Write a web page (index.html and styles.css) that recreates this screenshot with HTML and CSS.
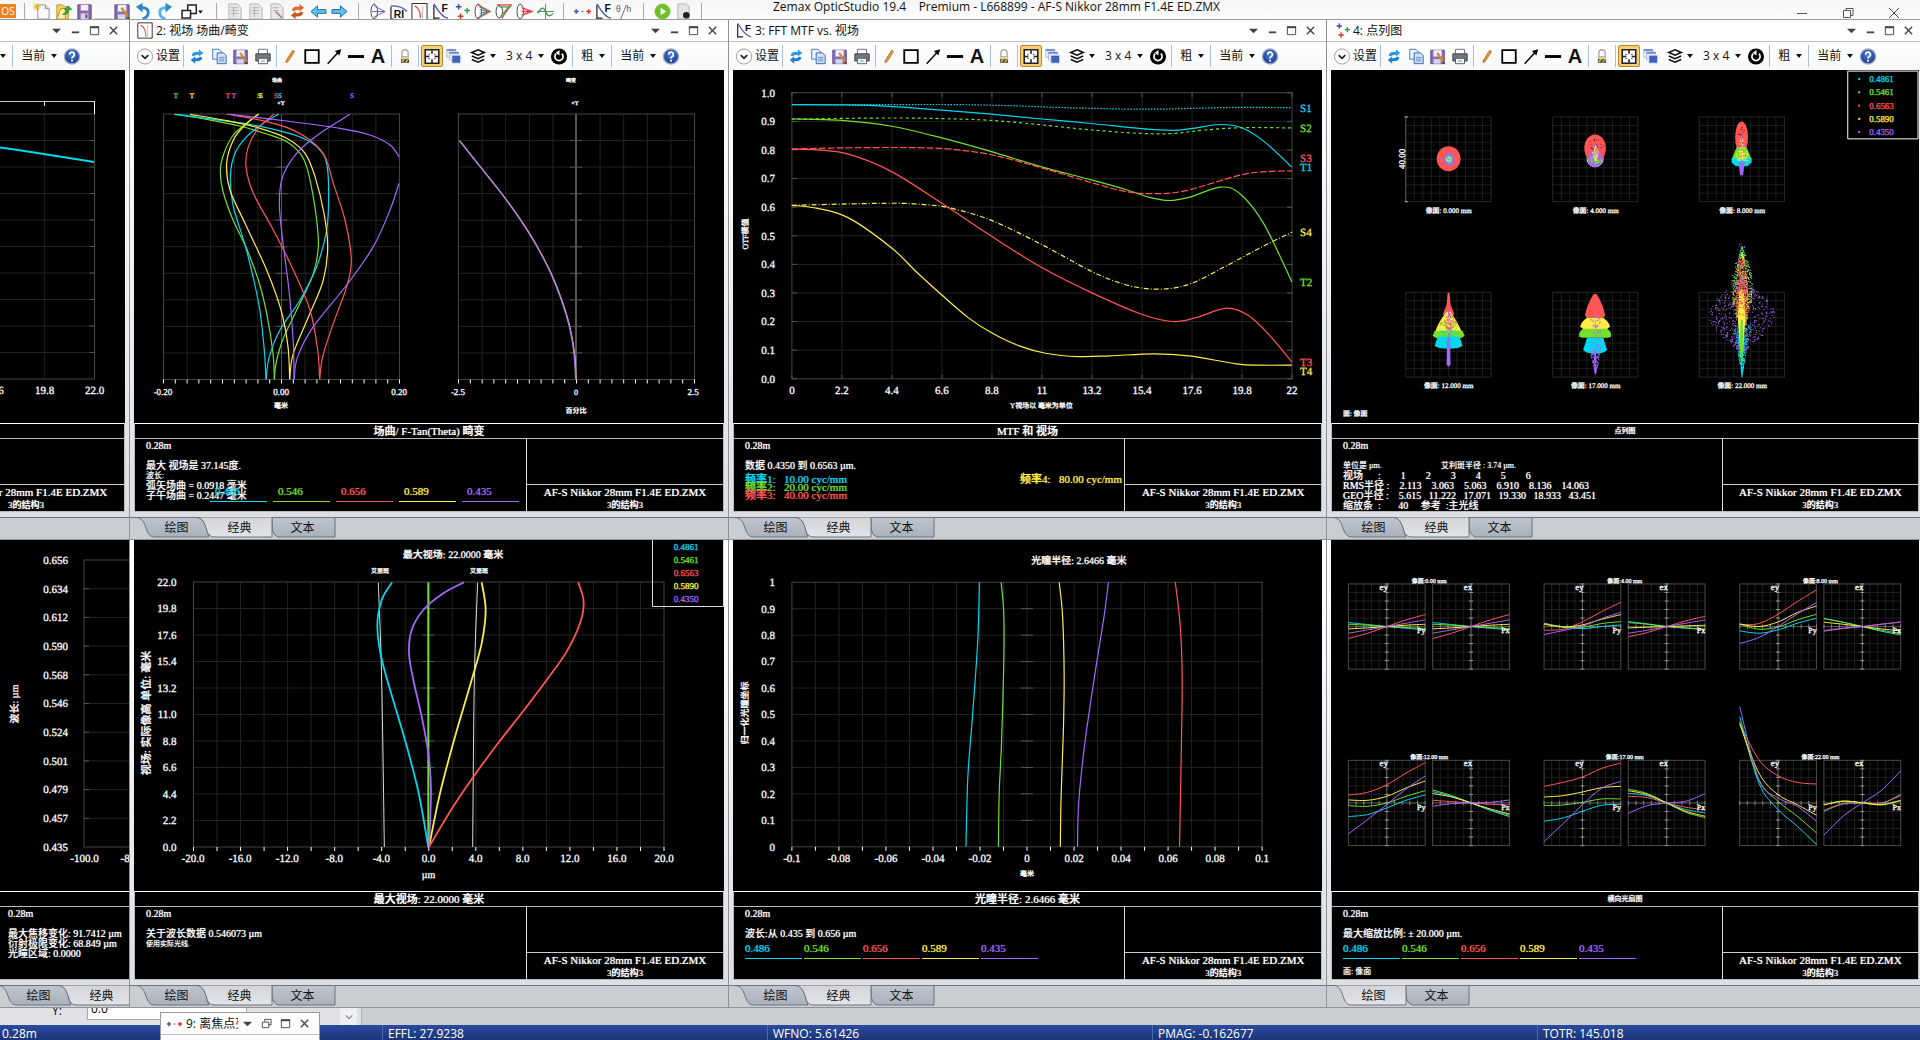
FILE: index.html
```html
<!DOCTYPE html>
<html lang="zh-CN">
<head>
<meta charset="utf-8">
<title>Zemax OpticStudio 19.4</title>
<link rel="stylesheet" href="styles.css">
</head>
<body>
<svg class="defs" aria-hidden="true">
  <defs>
    <linearGradient id="gTab" x1="0" y1="0" x2="0" y2="1"><stop offset="0" stop-color="#bfc5ce"/><stop offset="1" stop-color="#a9b1bc"/></linearGradient>
    <linearGradient id="gOn" x1="0" y1="0" x2="0" y2="1"><stop offset="0" stop-color="#d2d4d8"/><stop offset="1" stop-color="#e2e4e8"/></linearGradient>
    <radialGradient id="gHelp" cx=".5" cy=".4"><stop offset="0" stop-color="#4f86e0"/><stop offset="1" stop-color="#1f3f94"/></radialGradient>
    <symbol id="i-new" viewBox="0 0 20 18"><path d="M5 2h8l4 4v11H5z" fill="#fafafa" stroke="#8a8f98"/><path d="M13 2v4h4" fill="#ddd" stroke="#8a8f98"/><path d="M4 0v8M0 4h8M1 1l6 6M7 1L1 7" stroke="#e0b000"/></symbol>
    <symbol id="i-open" viewBox="0 0 20 18"><path d="M3 2h6l2 2h4v13H3z" fill="#f3d26b" stroke="#b78f1e"/><path d="M3 17L7 6h5v11z" fill="#fff0a8" stroke="#b78f1e"/><path d="M8 9q7 1 7-5h3l-4-4-4 4h2q0 4-4 5z" fill="#3aa845" stroke="#1f7a2b" stroke-width=".6" transform="translate(1 3)"/></symbol>
    <symbol id="i-save" viewBox="0 0 20 18"><path d="M3 2h14v15H3z" fill="#8d6bb0" stroke="#5d3d80"/><path d="M6 2h8v6H6z" fill="#f3f0f8"/><path d="M6 11h8v6H6z" fill="#d9d6e4"/><path d="M11 12h2v4h-2z" fill="#5d3d80"/></symbol>
    <symbol id="i-saveas" viewBox="0 0 20 18"><path d="M2 2h15v15H2z" fill="#8673b8" stroke="#54418a"/><path d="M5 2h9v7H5z" fill="#f3f0f8"/><path d="M5 12h8v5H5z" fill="#d9d6e4"/><path d="M9 5l8 11" stroke="#d9872b" stroke-width="2.4"/><path d="M16 14l2 4-3-2z" fill="#333"/></symbol>
    <symbol id="i-undo" viewBox="0 0 20 18"><path d="M6 5q9-1 9 5 0 5-6 7" fill="none" stroke="#2f86c8" stroke-width="3"/><path d="M2 4l7-4v10z" fill="#2f86c8"/></symbol>
    <symbol id="i-redo" viewBox="0 0 20 18"><path d="M14 5q-9-1-9 5 0 5 6 7" fill="none" stroke="#55b4e8" stroke-width="3"/><path d="M18 4l-7-4v10z" fill="#2f86c8"/></symbol>
    <symbol id="i-wins" viewBox="0 0 24 18"><path d="M8 2h9v9H8z" fill="#fff" stroke="#222" stroke-width="1.6"/><path d="M2 8h9v8H2z" fill="#fff" stroke="#222" stroke-width="1.6"/><path d="M19 8h5l-2.500 3z"/></symbol>
    <symbol id="i-doc" viewBox="0 0 20 18"><path d="M4 1h9l4 4v12H4z" fill="#e8e8e8" stroke="#b5b5b5"/><path d="M6 5h8M6 8h8M6 11h8M9 4v11" stroke="#b0b0b0"/></symbol>
    <symbol id="i-docx" viewBox="0 0 20 18"><path d="M4 1h9l4 4v12H4z" fill="#e8e8e8" stroke="#b5b5b5"/><path d="M6 5h6M6 8h6" stroke="#b0b0b0"/><path d="M9 9l7 7" stroke="#b06a6a" stroke-width="1.5"/></symbol>
    <symbol id="i-cycle" viewBox="0 0 20 18"><path d="M4 8q1-5 8-4V1l5 4-5 4V7q-5 0-5 2z" fill="#e2672b"/><path d="M16 10q-1 5-8 4v3l-5-4 5-4v2q5 0 5-2z" fill="#c9531c"/></symbol>
    <symbol id="i-sync" viewBox="0 0 20 18"><path d="M4 8q1-5 8-4V1l5 4-5 4V7q-5 0-5 2z" fill="#2d9be0"/><path d="M16 10q-1 5-8 4v3l-5-4 5-4v2q5 0 5-2z" fill="#1f7fc8"/></symbol>
    <symbol id="i-left" viewBox="0 0 20 18"><path d="M2 9l7-6v4h9v4H9v4z" fill="#5cc0f0" stroke="#2368a8"/></symbol>
    <symbol id="i-right" viewBox="0 0 20 18"><path d="M18 9l-7-6v4H2v4h9v4z" fill="#5cc0f0" stroke="#2368a8"/></symbol>
    <symbol id="i-lens" viewBox="0 0 20 18"><path d="M6 1q4 1 4 8t-4 8q-3-2-3-8t3-8z" fill="#fff" stroke="#444"/><path d="M6 3l12 6-12 6M4 9h14" fill="none" stroke="#5a63b8"/></symbol>
    <symbol id="i-lensg" viewBox="0 0 20 18"><path d="M5 1q4 1 4 8t-4 8q-3-2-3-8t3-8z" fill="#fff" stroke="#444"/><path d="M5 2l13 7L5 16" fill="none" stroke="#e04848" stroke-width="1.500"/><path d="M7 4l9 5-9 5" fill="none" stroke="#3aa050" stroke-width="1.300"/><path d="M7 7l8 2-8 2" fill="none" stroke="#5a63b8"/></symbol>
    <symbol id="i-lensd" viewBox="0 0 20 18"><path d="M5 2q4 1 4 7t-4 7q-3-2-3-7t3-7z" fill="#fff" stroke="#444"/><path d="M3 2h15L8 16" fill="none" stroke="#e04848" stroke-width="1.500"/><path d="M5 4h11L7 14" fill="none" stroke="#3aa050" stroke-width="1.300"/></symbol>
    <symbol id="i-lensr" viewBox="0 0 20 18"><path d="M5 1q4 1 4 8t-4 8q-3-2-3-8t3-8z" fill="#fff" stroke="#444"/><path d="M7 5l11 4L7 13M7 9h9" fill="none" stroke="#e04848" stroke-width="1.500"/></symbol>
    <symbol id="i-curve" viewBox="0 0 20 18"><path d="M2 .5h16v17H2z" fill="#fff" stroke="#222"/><path d="M5 3q6 3 6 13" fill="none" stroke="#e05050" stroke-width="1.300"/><path d="M13 3v13" stroke="#e9a0a0"/></symbol>
    <symbol id="i-mtf" viewBox="0 0 20 18"><path d="M3 2v15M3 16h6" stroke="#222" stroke-width="1.300"/><path d="M3 1c3 4 7 14 15 15" fill="none" stroke="#4a56b0" stroke-width="1.400"/><text x="11" y="10" class="glyphs">F</text></symbol>
    <symbol id="i-ri" viewBox="0 0 20 18"><path d="M2 17V4M2 17h3" stroke="#222" stroke-width="1.300"/><path d="M2 3q12 0 17 6" fill="none" stroke="#4a56b0" stroke-width="1.300"/><text x="5" y="16" class="glyphs">RI</text></symbol>
    <symbol id="i-theta" viewBox="0 0 20 18"><path d="M6 17L12 2" stroke="#667"/><text x="1" y="9" class="thin">θ</text><text x="12" y="9" class="thin">h</text></symbol>
    <symbol id="i-dots4" viewBox="0 0 20 18"><path d="M4 4h6M7 1v6" stroke="#3a4fa8" stroke-width="1.500"/><path d="M13 8h6M16 5v6" stroke="#2a9a4a" stroke-width="1.500"/><path d="M6 14h6M9 11v6" stroke="#e03030" stroke-width="1.500"/></symbol>
    <symbol id="i-dots3" viewBox="0 0 20 18"><path d="M1 9h5M3.500 6.500v5" stroke="#4b57a8" stroke-width="1.800"/><path d="M9 9h2" stroke="#3a9a5a" stroke-width="1.500"/><path d="M14 9h5M16.500 6.500v5" stroke="#e03030" stroke-width="1.800"/></symbol>
    <symbol id="i-sine" viewBox="0 0 20 18"><path d="M1 9h18M10 1v16" stroke="#777"/><path d="M2 11q5-10 8-2t8 2" fill="none" stroke="#3aa050" stroke-width="1.500"/></symbol>
    <symbol id="i-play" viewBox="0 0 20 18"><circle cx="10" cy="9" r="8" fill="#6fbf2a" stroke="#7fc23c"/><path d="M8 5l6 4-6 4z" fill="#fff"/></symbol>
    <symbol id="i-docl" viewBox="0 0 20 18"><path d="M4 1h9l3 3v13H4z" fill="#e4e4e4" stroke="#b5b5b5"/><circle cx="13" cy="13" r="3.500" fill="#222"/></symbol>
    <symbol id="i-chev" viewBox="1 1 18 18"><circle cx="10" cy="10" r="8" fill="#fff" stroke="#999"/><path d="M6.500 8.500l3.500 3.500 3.500-3.500" fill="none" stroke="#222" stroke-width="1.800"/></symbol>
    <symbol id="i-copy" viewBox="0 0 20 18"><path d="M3 1h7l3 3v8H3z" fill="#eaf3fc" stroke="#3d6fb0"/><path d="M8 5h7l3 3v9H8z" fill="#d4e6f8" stroke="#2d5aa0"/><path d="M10 10h6M10 12h6M10 14h6" stroke="#5a8ac8"/></symbol>
    <symbol id="i-print" viewBox="0 0 20 18"><path d="M5 1h10v6H5z" fill="#fff" stroke="#666"/><path d="M2 6h16v8H2z" fill="#73777d" stroke="#3c3f44"/><path d="M5 11h10v6H5z" fill="#f4f4f4" stroke="#555"/><path d="M8 14h4" stroke="#3d9bd0"/></symbol>
    <symbol id="i-pencil" viewBox="0 0 20 18"><path d="M6 13L13 2l2 1.500L8 14.500l-2.500 1.500z" fill="#e8973a" stroke="#a85c12" stroke-width=".8"/></symbol>
    <symbol id="i-rect" viewBox="0 0 20 18"><path d="M2.500 2h15v14h-15z" fill="none" stroke="#000" stroke-width="2"/></symbol>
    <symbol id="i-arrow" viewBox="0 0 20 18"><path d="M3 17L15 4" stroke="#000" stroke-width="1.600"/><path d="M18 1l-2 7-5-5z"/></symbol>
    <symbol id="i-line" viewBox="0 0 20 18"><path d="M1 9h18" stroke="#000" stroke-width="3.200"/></symbol>
    <symbol id="i-lock" viewBox="0 0 20 18"><path d="M6.500 9V5a3.500 3.500 0 0 1 7 0v4" fill="none" stroke="#aaa" stroke-width="1.500"/><path d="M5.500 9h9v7h-9z" fill="#444"/><path d="M5.500 9h9v3h-9z" fill="#d8cf9a"/><path d="M6 14l2-2h2l-3 4zM10 15l3-3h1v1l-3 3z" fill="#e8c840"/></symbol>
    <symbol id="i-fit" viewBox="0 0 20 18"><path d="M2.500 1.500h15v15h-15z" fill="#fff" stroke="#222" stroke-width="1.800"/><path d="M10 2v4M10 12v4M3 9h4M13 9h4" stroke="#222" stroke-width="1.800"/><path d="M7 6v1H6M13 6v1h1M7 12v-1H6M13 12v-1h1" stroke="#222" fill="none"/></symbol>
    <symbol id="i-cwin" viewBox="0 0 20 18"><path d="M2 1h10v9H2z" fill="#e8eef8" stroke="#b0bbd0"/><path d="M5 4h10v9H5z" fill="#e8eef8" stroke="#b0bbd0"/><path d="M2 1h10v2H2zM5 4h10v2H5z" fill="#6f88c8"/><path d="M7.500 7.500h10v9h-10z" fill="#3f62bc" stroke="#e8eef8"/></symbol>
    <symbol id="i-layers" viewBox="0 0 20 18"><path d="M10 2l7 3-7 3-7-3zM3 9l7 3 7-3M3 13l7 3 7-3" fill="none" stroke="#111" stroke-width="1.800"/></symbol>
    <symbol id="i-reset" viewBox="1 1 18 18"><circle cx="10" cy="10" r="8.500"/><path d="M7 7a4.300 4.300 0 1 0 6 0" fill="none" stroke="#fff" stroke-width="1.800"/><path d="M10.500 3v6L6.500 6z" fill="#fff"/></symbol>
    <symbol id="i-help" viewBox="1 1 18 18"><circle cx="10" cy="10" r="8" fill="url(#gHelp)" stroke="#9aa8c4" stroke-width="1.500"/><path d="M7.500 8a2.500 2.500 0 1 1 3.500 2.200q-1 .5-1 1.800M10 13.500v2" fill="none" stroke="#fff" stroke-width="1.800"/></symbol>
    <symbol id="i-down" viewBox="0 0 12 12"><path d="M1 4h10L6 9z" fill="#444"/></symbol>
    <symbol id="i-min" viewBox="0 0 12 12"><path d="M2 8h8" stroke="#444" stroke-width="2"/></symbol>
    <symbol id="i-max" viewBox="0 0 12 12"><path d="M1.500 2v8.500h9V2z" fill="none" stroke="#444"/><path d="M1 2.500h10" stroke="#444" stroke-width="2"/></symbol>
    <symbol id="i-close" viewBox="0 0 12 12"><path d="M2 2l8 8M10 2l-8 8" stroke="#444" stroke-width="1.500"/></symbol>
    <symbol id="i-rest" viewBox="0 0 12 12"><path d="M4 4V1.500h7v6H8M1.500 4.500h7v6h-7z" fill="none" stroke="#444"/></symbol>
    <symbol id="tabs3" viewBox="0 0 204 22"><path d="M139 .5h63V20h-57q-6-2-6-12z" fill="url(#gTab)" stroke="#6b7280"/><path d="M62 0C73 0 72 14 76 18q2 2 6 2h57V0z" fill="url(#gOn)" stroke="#6b7280"/><path d="M2 .5C9 .5 11 5 13 11c2 6 4 9 9 9h54C73 15 73 .5 63 .5z" fill="url(#gTab)" stroke="#6b7280"/></symbol>
    <symbol id="tabs2" viewBox="0 0 204 22"><path d="M76 .5h63V20H82q-6-2-6-12z" fill="url(#gTab)" stroke="#6b7280"/><path d="M2 0C9 0 11 5 13 11c2 6 4 9 9 9h54V0z" fill="url(#gOn)" stroke="#6b7280"/></symbol>
  </defs>
</svg>

<template id="tools">
  <button class="ico" aria-label="展开"><svg><use href="#i-chev"/></svg></button><button class="txt first">设置</button><i class="sep"></i>
  <button class="ico" aria-label="更新"><svg><use href="#i-sync"/></svg></button><button class="ico" aria-label="复制"><svg><use href="#i-copy"/></svg></button><button class="ico" aria-label="保存"><svg><use href="#i-saveas"/></svg></button><button class="ico" aria-label="打印"><svg><use href="#i-print"/></svg></button><i class="sep"></i>
  <button class="ico" aria-label="铅笔"><svg><use href="#i-pencil"/></svg></button><button class="ico" aria-label="矩形"><svg><use href="#i-rect"/></svg></button><button class="ico" aria-label="箭头"><svg><use href="#i-arrow"/></svg></button><button class="ico" aria-label="线"><svg><use href="#i-line"/></svg></button><button class="ico glyph">A</button><i class="sep"></i>
  <button class="ico" aria-label="锁定"><svg><use href="#i-lock"/></svg></button><i class="sep"></i>
  <button class="ico on" aria-label="适合窗口"><svg><use href="#i-fit"/></svg></button><button class="ico" aria-label="克隆窗口"><svg><use href="#i-cwin"/></svg></button>
  <button class="txt" aria-label="图层"><svg><use href="#i-layers"/></svg><b class="car"></b></button><button class="txt">3 x 4<b class="car"></b></button><button class="ico" aria-label="重置"><svg><use href="#i-reset"/></svg></button><i class="sep"></i>
  <button class="txt">粗<b class="car"></b></button><i class="sep"></i><button class="txt">当前<b class="car"></b></button><button class="ico" aria-label="帮助"><svg><use href="#i-help"/></svg></button>
</template>
<template id="winbtns">
  <button aria-label="菜单"><svg><use href="#i-down"/></svg></button><button aria-label="最小化"><svg><use href="#i-min"/></svg></button><button aria-label="最大化"><svg><use href="#i-max"/></svg></button><button aria-label="关闭"><svg><use href="#i-close"/></svg></button>
</template>

<header class="titlebar">
  <nav class="quick">
    <span class="logo">OS</span><i></i>
    <button aria-label="新建"><svg><use href="#i-new"/></svg></button><button aria-label="打开"><svg><use href="#i-open"/></svg></button><button aria-label="保存"><svg><use href="#i-save"/></svg></button><i class="blank"></i>
    <button aria-label="另存为"><svg><use href="#i-saveas"/></svg></button><button aria-label="撤消"><svg><use href="#i-undo"/></svg></button><button aria-label="重做"><svg><use href="#i-redo"/></svg></button><button class="wide" aria-label="窗口"><svg><use href="#i-wins"/></svg></button><i></i>
    <button aria-label="数据"><svg><use href="#i-doc"/></svg></button><button aria-label="报告"><svg><use href="#i-doc"/></svg></button><button aria-label="检查"><svg><use href="#i-docx"/></svg></button><button aria-label="更新"><svg><use href="#i-cycle"/></svg></button><button aria-label="后退"><svg><use href="#i-left"/></svg></button><button aria-label="前进"><svg><use href="#i-right"/></svg></button><i></i>
    <button aria-label="截面"><svg><use href="#i-lens"/></svg></button><button aria-label="相对照度"><svg><use href="#i-ri"/></svg></button><button aria-label="场曲"><svg><use href="#i-curve"/></svg></button><button aria-label="MTF"><svg><use href="#i-mtf"/></svg></button><button aria-label="点列图"><svg><use href="#i-dots4"/></svg></button><button aria-label="布局"><svg><use href="#i-lensg"/></svg></button><button aria-label="光线"><svg><use href="#i-lensd"/></svg></button><button aria-label="实体"><svg><use href="#i-lensr"/></svg></button><button aria-label="光扇"><svg><use href="#i-sine"/></svg></button><i></i>
    <button aria-label="离焦"><svg><use href="#i-dots3"/></svg></button><button aria-label="离焦 MTF"><svg><use href="#i-mtf"/></svg></button><button aria-label="角度"><svg><use href="#i-theta"/></svg></button><i></i>
    <button aria-label="运行"><svg><use href="#i-play"/></svg></button><button aria-label="锁定"><svg><use href="#i-docl"/></svg></button><i></i>
  </nav>
  <h1>Zemax OpticStudio 19.4 &nbsp;&nbsp; Premium - L668899 - AF-S Nikkor 28mm F1.4E ED.ZMX</h1>
  <div class="sys"><button aria-label="最小化"><svg viewBox="0 0 12 12"><path d="M1 6.500h10" stroke="#555"/></svg></button><button aria-label="还原"><svg viewBox="0 0 12 12"><path d="M4 3V1.500h7v7H9M1.500 3.500h7v7h-7z" fill="none" stroke="#555"/></svg></button><button aria-label="关闭"><svg viewBox="0 0 12 12"><path d="M1 1l10 10M11 1L1 11" stroke="#444"/></svg></button></div>
</header>

<main class="work">
  <section class="win cut-left">
    <div class="pane">
      <div class="head"><span class="ttl"></span><div class="wb"></div></div>
      <div class="tools"></div>
      <svg class="plot" id="p1" viewBox="-465 70 590 353"></svg>
      <div class="foot"><div class="cap"></div><div class="info"></div><div class="blank"></div><div class="file">AF-S Nikkor 28mm F1.4E ED.ZMX<small>3的结构3</small></div></div>
      <div class="tabs"></div>
    </div>
  </section>
  <section class="win">
    <div class="pane">
      <div class="head"><svg><use href="#i-curve"/></svg><span class="ttl">2: 视场 场曲/畸变</span><div class="wb"></div></div>
      <div class="tools"></div>
      <svg class="plot" id="p2" viewBox="134 70 590 353"></svg>
      <div class="foot"><div class="cap">场曲/ F-Tan(Theta) 畸变</div>
        <div class="info"><p>0.28m</p><p></p><p>最大 视场是 37.145度.</p><p class="s8">波长:</p><p>弧矢场曲 = 0.0918 毫米</p><p>子午场曲 = 0.2447 毫米</p>
          <div class="keys over"><span class="c">0.486</span><span class="g">0.546</span><span class="r">0.656</span><span class="y">0.589</span><span class="v">0.435</span></div></div>
        <div class="blank"></div><div class="file">AF-S Nikkor 28mm F1.4E ED.ZMX<small>3的结构3</small></div></div>
      <div class="tabs"><svg><use href="#tabs3"/></svg><button>绘图</button><button>经典</button><button>文本</button></div>
    </div>
  </section>
  <section class="win">
    <div class="pane">
      <div class="head"><svg><use href="#i-mtf"/></svg><span class="ttl">3: FFT MTF vs. 视场</span><div class="wb"></div></div>
      <div class="tools"></div>
      <svg class="plot" id="p3" viewBox="732 70 590 353"></svg>
      <div class="foot"><div class="cap">MTF 和 视场</div>
        <div class="info"><p>0.28m</p><p></p><p>数据 0.4350 到 0.6563 µm.</p>
          <div class="freq"><span class="c">频率1:</span><span class="c">10.00 cyc/mm</span><span class="y">频率4:</span><span class="y">80.00 cyc/mm</span><span class="g">频率2:</span><span class="g row">20.00 cyc/mm</span><span class="r">频率3:</span><span class="r row">40.00 cyc/mm</span></div></div>
        <div class="blank"></div><div class="file">AF-S Nikkor 28mm F1.4E ED.ZMX<small>3的结构3</small></div></div>
      <div class="tabs"><svg><use href="#tabs3"/></svg><button>绘图</button><button>经典</button><button>文本</button></div>
    </div>
  </section>
  <section class="win last">
    <div class="pane">
      <div class="head"><svg><use href="#i-dots4"/></svg><span class="ttl">4: 点列图</span><div class="wb"></div></div>
      <div class="tools"></div>
      <svg class="plot" id="p4" viewBox="1330 70 590 353"></svg>
      <div class="foot"><div class="cap s7">点列图</div>
        <div class="info pre"><p>0.28m</p><p></p><p class="s8 airy"><span>单位是 µm.</span><span>艾利斑半径 : 3.74 µm.</span></p><p>视场      :        1        2        3        4        5        6</p><p>RMS半径 :    2.113    3.063    5.063    6.910    8.136    14.063</p><p>GEO半径 :    5.615   11.222   17.071   19.330   18.933   43.451</p><p>缩放条  :       40     参考  :主光线</p></div>
        <div class="blank"></div><div class="file">AF-S Nikkor 28mm F1.4E ED.ZMX<small>3的结构3</small></div></div>
      <div class="tabs"><svg><use href="#tabs3"/></svg><button>绘图</button><button>经典</button><button>文本</button></div>
    </div>
  </section>

  <section class="win cut-right">
    <div class="pane">
      <svg class="plot" id="p5" viewBox="-4 540 590 351"></svg>
      <div class="foot"><div class="cap"></div><div class="info"><p>0.28m</p><p></p><p>最大焦移变化: 91.7412 µm</p><p>衍射极限变化: 68.849 µm</p><p>光瞳区域: 0.0000</p></div><div class="blank"></div><div class="file"></div></div>
      <div class="tabs"><svg><use href="#tabs3"/></svg><button>绘图</button><button>经典</button></div>
    </div>
  </section>
  <section class="win">
    <div class="pane">
      <svg class="plot" id="p6" viewBox="134 540 590 351"></svg>
      <div class="foot"><div class="cap">最大视场: 22.0000 毫米</div><div class="info"><p>0.28m</p><p></p><p>关于波长数据 0.546073 µm</p><p class="s7">使用实际光线.</p></div><div class="blank"></div><div class="file">AF-S Nikkor 28mm F1.4E ED.ZMX<small>3的结构3</small></div></div>
      <div class="tabs"><svg><use href="#tabs3"/></svg><button>绘图</button><button>经典</button><button>文本</button></div>
    </div>
  </section>
  <section class="win">
    <div class="pane">
      <svg class="plot" id="p7" viewBox="732 540 590 351"></svg>
      <div class="foot"><div class="cap">光瞳半径: 2.6466 毫米</div><div class="info"><p>0.28m</p><p></p><p>波长:从 0.435 到 0.656 µm</p>
        <div class="keys"><span class="c">0.486</span><span class="g">0.546</span><span class="r">0.656</span><span class="y">0.589</span><span class="v">0.435</span></div></div><div class="blank"></div><div class="file">AF-S Nikkor 28mm F1.4E ED.ZMX<small>3的结构3</small></div></div>
      <div class="tabs"><svg><use href="#tabs3"/></svg><button>绘图</button><button>经典</button><button>文本</button></div>
    </div>
  </section>
  <section class="win last">
    <div class="pane">
      <svg class="plot" id="p8" viewBox="1330 540 590 351"></svg>
      <div class="foot"><div class="cap s7">横向光扇图</div><div class="info"><p>0.28m</p><p></p><p>最大缩放比例: ± 20.000 µm.</p>
        <div class="keys"><span class="c">0.486</span><span class="g">0.546</span><span class="r">0.656</span><span class="y">0.589</span><span class="v">0.435</span></div><p class="s8 low">面: 像面</p></div><div class="blank"></div><div class="file">AF-S Nikkor 28mm F1.4E ED.ZMX<small>3的结构3</small></div></div>
      <div class="tabs"><svg><use href="#tabs2"/></svg><button>绘图</button><button>文本</button></div>
    </div>
  </section>
</main>

<div class="under">
  <div class="form"><label for="fy">Y:</label><input id="fy" value="0.0"><button aria-label="向下滚动"><svg viewBox="0 0 12 12"><path d="M2 4l4 4 4-4" fill="none" stroke="#888" stroke-width="1.500"/></svg></button></div>
  <aside class="float"><div class="fhead"><svg class="fi"><use href="#i-dots3"/></svg><span>9: 离焦点列图</span><button aria-label="菜单"><svg><use href="#i-down"/></svg></button><button aria-label="还原"><svg><use href="#i-rest"/></svg></button><button aria-label="最大化"><svg><use href="#i-max"/></svg></button><button aria-label="关闭"><svg><use href="#i-close"/></svg></button></div></aside>
</div>
<footer class="status"><span>0.28m</span><span>EFFL: 27.9238</span><span>WFNO: 5.61426</span><span>PMAG: -0.162677</span><span>TOTR: 145.018</span></footer>
<script src="charts.js"></script>
</body>
</html>
```
FILE: styles.css
```css
* { box-sizing: border-box; }
body { margin: 0; height: 100vh; overflow: hidden; display: flex; flex-direction: column; background: #cacdd2; font: 12px/16px "Open Sans", "Noto Sans CJK SC", sans-serif; color: #111; }
button { border: 0; padding: 0; background: none; font: inherit; color: inherit; display: flex; align-items: center; justify-content: center; }
h1, p { margin: 0; font-weight: normal; }
.defs { position: absolute; width: 0; height: 0; }
.glyphs { font: bold 11px "Liberation Sans", sans-serif; fill: #111; }
.thin { font: 9px "Liberation Sans", sans-serif; fill: #556; }

.titlebar { flex: 0 0 20px; display: flex; background: linear-gradient(#f6f6f6, #fdfdfd); border-bottom: 1px solid #9a9ba0; overflow: hidden; }
.quick { flex: 0 0 710px; display: flex; align-items: center; padding-top: 3px; }
.quick button { width: 21px; height: 17px; flex: none; }
.quick button svg { width: 19px; height: 17px; }
.quick .wide { width: 33px; }
.quick .wide svg { width: 25px; }
.quick i { flex: 1; height: 16px; background: linear-gradient(#a8a8a8, #a8a8a8) center / 1px 16px no-repeat; }
.quick i.blank { background: none; }
.quick .logo { width: 16px; height: 14px; background: #f08020; color: #fff; font: 10px/14px "Open Sans", sans-serif; text-align: center; }
.titlebar h1 { flex: 1; padding-left: 63px; font-size: 12px; line-height: 14px; white-space: nowrap; }
.sys { display: flex; align-items: flex-end; padding-right: 3px; }
.sys button { width: 46px; height: 12px; }
.sys svg { width: 12px; height: 12px; }

.work { flex: 1; min-height: 0; display: grid; grid-template-columns: 129fr 599fr 598fr 594fr; grid-template-rows: 520fr 468fr; }
.win { min-width: 0; min-height: 0; display: flex; overflow: hidden; border-left: 1px solid #8f9299; border-bottom: 1px solid #8f9299; background: linear-gradient(#fff 0, #fff 10%, #dcdde2 100%); padding: 0 4px; }
.win.last { padding-right: 1px; }
.win.cut-left { justify-content: flex-end; padding-left: 0; border-left: 0; }
.win.cut-left .pane { flex: 0 0 590px; }
.win.cut-right { padding: 0; border-left: 0; }
.win.cut-right .pane { flex: 0 0 590px; margin-left: -4px; }
.pane { flex: 1; min-width: 0; display: flex; flex-direction: column; position: relative; }
.head { flex: 0 0 22px; margin: 0 -4px; padding: 0 6px; background: #fdfdfd; border-bottom: 1px solid #c0c2c6; display: flex; align-items: center; gap: 2px; }
.last .head { margin-right: -1px; padding-right: 2px; }
.head > svg { width: 18px; height: 17px; }
.head .ttl { flex: 1; font-size: 12px; white-space: nowrap; }
.wb { display: flex; }
.wb button { width: 19px; height: 16px; }
.wb svg { width: 11px; height: 11px; }
.tools { flex: 0 0 28px; margin: 0 -4px; padding: 0 4px; background: linear-gradient(#fff, #f7f8fa); display: flex; align-items: center; white-space: nowrap; overflow: hidden; }
.tools .ico { flex: 0 0 22px; height: 22px; }
.tools .ico svg { width: 18px; height: 17px; }
.tools .ico.on { background: #f8cf72; border: 1px solid #b9862f; border-radius: 2px; }
.tools .glyph { font: bold 20px/20px "Liberation Sans", sans-serif; }
.tools .txt { padding: 0 4px 0 6px; gap: 6px; }
.tools .txt svg { width: 18px; height: 16px; margin-left: -2px; margin-right: -3px; }
.tools .txt.first { padding: 0 1px 0 0; }
.tools .sep { width: 1px; height: 22px; margin: 0 2px; background: #a9bfd8; }
.car { border: 3px solid transparent; border-top: 4px solid #111; border-bottom: 0; }
.plot { flex: 1; min-height: 0; width: 100%; background: #000; display: block; overflow: hidden; font-family: "Liberation Serif", "Noto Sans CJK SC", serif; }
.plot text { font-weight: 500; text-rendering: geometricPrecision; }

.foot { flex: 0 0 89px; background: #000; color: #fff; border: 1px solid #bbb; border-top-color: #fff; display: grid; grid-template-columns: 2fr 1fr; grid-template-rows: 15px 46px 1fr; font: 500 10px/10px "Liberation Serif", "Noto Sans CJK SC", serif; text-shadow: 0 0 1px currentColor; white-space: nowrap; }
.cap { grid-column: 1 / 3; border-bottom: 1px solid #bbb; text-align: center; font-size: 11px; line-height: 15px; overflow: hidden; }
.info { grid-row: 2 / 4; border-right: 1px solid #ddd; padding: 2px 0 0 11px; position: relative; overflow: hidden; }
.info p { height: 10px; }
.info.pre p { white-space: pre; }
.blank { border-bottom: 1px solid #ccc; }
.file { font-size: 11px; line-height: 13px; text-align: center; padding-top: 1px; }
.file small { display: block; font-size: 9px; line-height: 12px; }
.foot .s8 { font-size: 8px; }
.foot .s7 { font-size: 7px; }
.foot .low { padding-top: 8px; }
.airy { display: grid; grid-template-columns: 98px auto; }
.keys { display: flex; gap: 2px; padding-top: 4px; font-size: 11px; }
.keys span { width: 57px; padding-bottom: 5px; border-bottom: 1px solid; }
.keys.over { position: absolute; left: 75px; top: 43px; gap: 6px; }
.keys.over span { padding-left: 5px; }
.c { color: #00d8f0; } .g { color: #72e02c; } .r { color: #ff5555; } .y { color: #ffec48; } .v { color: #a566ff; }
.freq { display: grid; grid-template-columns: 39px 236px 39px auto; font-size: 11px; line-height: 8px; padding-top: 4px; }
.freq .row { grid-column: 2 / 5; }

.tabs { flex: 0 0 22px; margin: 5px -4px 0; background: #cacdd2; border-top: 1px solid #6b7280; position: relative; display: flex; padding-left: 15px; }
.last .tabs { margin-right: -1px; }
.tabs > svg { position: absolute; left: 3px; top: -1px; width: 204px; height: 22px; }
.tabs button { width: 63px; height: 19px; position: relative; }

.under { flex: 0 0 17px; position: relative; }
.form { width: 362px; height: 17px; background: #dfe1e5; border-right: 1px solid #aaa; display: flex; align-items: flex-start; overflow: hidden; }
.form label { width: 87px; padding-left: 52px; line-height: 6px; }
.form input { width: 160px; height: 12px; border: 1px solid #aaa; border-top: 0; padding: 0 3px 10px; font: inherit; line-height: 4px; }
.form button { margin-left: auto; margin-right: 4px; width: 17px; height: 17px; background: #f0f0f0; }
.form svg { width: 10px; height: 10px; }
.float { position: absolute; z-index: 2; left: 160px; top: 4px; width: 160px; height: 28px; background: #fdfdfd; border: 1px solid #9a9ba0; border-bottom: 0; }
.fhead { display: flex; align-items: center; height: 22px; border-bottom: 1px solid #c0c2c6; padding: 0 5px; }
.fhead .fi { width: 17px; height: 16px; flex: none; margin-right: 3px; }
.fhead span { width: 52px; overflow: hidden; white-space: nowrap; }
.fhead button { width: 19px; height: 16px; flex: none; }
.fhead button svg { width: 11px; height: 11px; }
.status { flex: 0 0 15px; display: grid; grid-template-columns: 382fr 385fr 385fr 385fr 383fr; background: linear-gradient(#2a4b9e, #1b3377); color: #fff; overflow: hidden; line-height: 18px; }
.status span { height: 15px; padding-left: 5px; border-left: 1px solid #4a68b0; white-space: nowrap; overflow: hidden; }
.status span:first-child { padding-left: 2px; border: 0; }
```
FILE: charts.js
```js
const C = { c: '#00d8f0', g: '#72e02c', r: '#ff5555', y: '#ffec48', v: '#a566ff', w: '#ffffff' };
const $ = id => document.getElementById(id);

document.querySelectorAll('div.tools').forEach(n => n.append($('tools').content.cloneNode(true)));
document.querySelectorAll('div.wb').forEach(n => n.append($('winbtns').content.cloneNode(true)));

function el(parent, name, attrs, text) {
  const n = document.createElementNS('http://www.w3.org/2000/svg', name);
  for (const k in attrs) n.setAttribute(k, attrs[k]);
  if (text !== undefined) n.textContent = text;
  parent.append(n);
  return n;
}
const line = (p, x1, y1, x2, y2, stroke, w = 1) => el(p, 'path', { d: `M${x1} ${y1}L${x2} ${y2}`, stroke, 'stroke-width': w });
function label(p, x, y, s, size = 11, fill = '#fff', anchor = 'middle') {
  return el(p, 'text', { x, y, dy: '.35em', 'font-size': size, fill, stroke: fill, 'stroke-width': .3, 'text-anchor': anchor }, s);
}
function side(p, x, y, s, size) {
  return el(p, 'text', { transform: `translate(${x} ${y}) rotate(-90)`, dy: '.35em', 'font-size': size, fill: '#fff', stroke: '#fff', 'stroke-width': .3, 'text-anchor': 'middle' }, s);
}
/* Smooth line through the samples (Catmull-Rom turned into Béziers). */
function curve(p, color, pts, w = 1, dash) {
  let d = `M${pts[0]}`;
  for (let i = 0; i < pts.length - 1; i++) {
    const a = pts[i - 1] || pts[i], b = pts[i], c = pts[i + 1], e = pts[i + 2] || c;
    d += `C${b[0] + (c[0] - a[0]) / 6} ${b[1] + (c[1] - a[1]) / 6} ${c[0] - (e[0] - b[0]) / 6} ${c[1] - (e[1] - b[1]) / 6} ${c}`;
  }
  const n = el(p, 'path', { d, fill: 'none', stroke: color, 'stroke-width': w });
  if (dash) n.setAttribute('stroke-dasharray', dash);
}
const mapper = (ox, oy, sx, sy) => flat => {
  const out = [];
  for (let i = 0; i < flat.length; i += 2) out.push([ox + flat[i] / sx, oy + flat[i + 1] / sy]);
  return out;
};
function grid(p, x0, y0, x1, y1, cols, rows, inner = '#232323', outer = '#444') {
  for (let i = 1; i < cols; i++) { const x = x0 + (x1 - x0) * i / cols; line(p, x, y0, x, y1, inner); }
  for (let i = 1; i < rows; i++) { const y = y0 + (y1 - y0) * i / rows; line(p, x0, y, x1, y, inner); }
  el(p, 'rect', { x: x0, y: y0, width: x1 - x0, height: y1 - y0, fill: 'none', stroke: outer });
}
const ticks = (p, x0, x1, y, n) => { for (let i = 0; i <= n; i++) { const x = x0 + (x1 - x0) * i / n; line(p, x, y, x, y + 4, '#fff'); } };
const marks = (p, x, y0, y1, n, l, r) => { for (let i = 1; i < n; i++) { const y = y0 + (y1 - y0) * i / n; line(p, x - l, y, x + r, y, '#555'); } };

/* 1: relative illumination, right end */
{ const p = $('p1');
  grid(p, -407, 114, 94.5, 379, 10, 10);
  line(p, -407, 101.5, 95, 101.5, '#ccc'); line(p, 94.5, 101, 94.5, 114, '#fff'); line(p, 44.500, 101, 44.500, 106, '#fff');
  marks(p, 94.500, 114, 379, 10, 5, 0);
  curve(p, C.c, [[-60, 139.500], [0, 147.500], [45, 154.200], [94, 162]], 2);
  label(p, -6, 390.500, '17.6'); label(p, 44.500, 390.500, '19.8'); label(p, 94.500, 390.500, '22.0');
}
/* 2: field curvature and distortion */
{ const p = $('p2'), m = mapper(0, 60, 3, 3), q = mapper(400, 60, 3, 3);
  grid(p, 163.5, 114, 399.5, 379.5, 10, 10);
  line(p, 281.5, 114, 281.5, 379, '#555'); marks(p, 281.5, 114, 379.5, 10, 6, 6); ticks(p, 163.500, 399.500, 379.500, 20);
  grid(p, 458.5, 114, 694.5, 379.5, 10, 10);
  line(p, 576, 114, 576, 379, '#555', 2); marks(p, 576, 114, 379.5, 10, 6, 6); ticks(p, 458.500, 694.500, 379.500, 20);
  const S = [
    ['g', [823,958,819,880,800,760,775,660,738,562,695,470,668,390,661,330,672,280,700,225,740,190,776,162]],
    ['g', [823,958,828,910,850,835,900,730,940,640,955,560,950,480,938,400,920,320,900,280,860,245,800,222,720,198,620,178,523,163]],
    ['c', [798,958,792,860,776,730,738,565,700,440,691,350,705,280,740,230,790,190,836,162]],
    ['c', [798,958,808,890,840,810,900,720,950,620,980,510,986,400,980,310,960,270,920,240,860,218,760,195,640,178,530,163]],
    ['y', [869,958,864,860,843,750,800,630,735,490,690,390,680,310,700,240,735,195,776,162]],
    ['y', [869,958,880,880,930,760,970,660,983,560,972,460,945,350,915,280,860,235,780,205,680,182,570,163]],
    ['r', [959,958,953,870,930,750,880,630,820,510,760,400,738,320,745,260,775,205,822,162]],
    ['r', [959,958,968,890,1000,790,1040,680,1054,600,1035,480,1000,370,975,290,930,240,860,202,780,180,680,162]],
    ['v', [882,958,880,850,868,700,848,540,838,430,848,350,890,280,960,220,1050,163]],
    ['v', [882,958,893,890,940,800,1040,675,1120,560,1170,450,1197,370]],
    ['v', [1197,290,1170,255,1110,225,1020,205,860,183,690,163]]];
  S.forEach(([k, d]) => curve(p, C[k], m(d), 1.2));
  const D = [527,958,522,880,508,800,484,720,450,635,408,555,360,478,302,398,240,320,178,242];
  curve(p, '#f0c080', q(D).map(([x, y]) => [x + 0.600, y]), 1); curve(p, '#b080f0', q(D), 1.2);
  [[176,'T','#30e0a0'],[192,'T',C.y],[228,'T',C.r],[234,'T',C.v],[259,'S',C.g],[261,'S',C.y],[276,'S',C.r],[280,'S',C.c],[352,'S',C.v]].forEach(([x, s, f]) => label(p, x, 96, s, 7, f));
  label(p, 277, 80.500, '场曲', 5); label(p, 571, 80.500, '畸变', 5); label(p, 281, 103, '+Y', 6); label(p, 575, 103, '+Y', 6);
  label(p, 163, 391.500, '-0.20', 9); label(p, 281, 391.500, '0.00', 9); label(p, 399, 391.500, '0.20', 9); label(p, 281, 405.500, '毫米', 7);
  label(p, 458, 391.500, '-2.5', 9); label(p, 576, 392, '0', 8); label(p, 693, 391.500, '2.5', 9); label(p, 576, 410.500, '百分比', 7);
}
/* 3: FFT MTF against field */
{ const p = $('p3'), m = mapper(730, 0, 2.529, 2.904);
  grid(p, 791, 92.500, 1292, 379, 10, 10);
  for (let i = 0; i <= 10; i++) {
    const x = 791 + 50.1 * i, y = 92.500 + 28.65 * i;
    line(p, x, 375, x, 379, '#555'); line(p, x, 92, x, 97, '#555'); line(p, 791, y, 796, y, '#555'); line(p, 1287, y, 1292, y, '#555');
    label(p, 774, y, (1 - i / 10).toFixed(1), 11, '#fff', 'end');
    label(p, x, 390.500, ['0','2.2','4.4','6.6','8.8','11','13.2','15.4','17.6','19.8','22'][i]);
  }
  const S = [
    ['c', [154,303,400,303,560,303,700,306,850,312,1000,316,1100,316,1200,313,1300,311,1421,312], '1.5 1.5'],
    ['c', [154,303,280,304,400,308,534,319,660,331,787,345,913,358,1040,373,1120,378,1170,372,1240,361,1295,371,1350,410,1421,485]],
    ['g', [154,345,400,342,540,344,660,349,787,362,913,377,1040,387,1120,387,1200,377,1300,370,1421,371], '3 3'],
    ['g', [154,345,280,349,407,366,534,400,660,440,787,484,913,522,1000,550,1060,573,1110,582,1160,573,1240,543,1290,563,1350,650,1421,819]],
    ['r', [154,432,280,429,440,428,550,432,660,449,787,487,913,530,1000,556,1070,562,1150,554,1290,508,1360,498,1421,496], '7 2'],
    ['r', [154,432,220,435,300,448,407,498,534,590,660,686,787,777,913,850,1040,913,1120,934,1180,922,1255,895,1310,916,1365,975,1421,1052]],
    ['y', [154,596,400,590,500,595,560,605,660,640,787,710,913,788,1000,827,1080,840,1160,826,1250,775,1340,720,1421,674], '5 2 1 2'],
    ['y', [154,596,220,605,300,634,407,720,470,790,534,857,600,922,660,967,730,1005,800,1027,880,1036,960,1034,1070,1028,1160,1034,1280,1057,1340,1061,1421,1061]]];
  S.forEach(([k, d, dash]) => curve(p, C[k], m(d), 1.2, dash));
  [['S1','c',107.500],['S2','g',127.500],['S3','r',158],['T1','c',167],['S4','y',232],['T2','g',282],['T3','r',362],['T4','y',371]].forEach(([s, k, y]) => label(p, 1300, y, s, 11, C[k], 'start'));
  label(p, 1041, 406, 'Y视场以 毫米为单位', 7); side(p, 744, 234, 'OTF模值', 8);
}
/* Repeatable pseudo-random numbers for the ray scatter. */
let seed = 7;
const rnd = () => (seed = (seed * 16807) % 2147483647) / 2147483647;
function scatter(p, color, cx, y0, y1, half, n, size = 1) {
  let d = '';
  for (let i = 0; i < n; i++) {
    const t = rnd(), w = half(t), x = cx + (rnd() * 2 - 1) * w, y = y0 + (y1 - y0) * t;
    d += `M${x.toFixed(1)} ${y.toFixed(1)}h${size}v${size}h-${size}z`;
  }
  el(p, 'path', { d, fill: color });
}
/* 4: spot diagram */
{ const p = $('p4'), xs = [1405, 1552.500, 1699.500], ys = [116.500, 292.500];
  const f = ['0.000','4.000','8.000','12.000','17.000','22.000'];
  f.forEach((s, i) => { const x = xs[i % 3], y = ys[i / 3 | 0]; grid(p, x, y, x + 85.500, y + 85, 10, 10, '#1e1e1e', '#262626'); label(p, x + 43, y + 93.500, `像面: ${s} mm`, 7); });
  line(p, 1405, 116, 1405, 201, '#555'); line(p, 1404, 116.500, 1407, 116.500, '#ccc'); line(p, 1404, 201.500, 1407, 201.500, '#ccc'); side(p, 1401, 158.500, '40.00', 9);
  const e = (cx, cy, rx, ry, fill, extra) => el(p, 'ellipse', { cx, cy, rx, ry, fill, ...extra });
  const sh = (d, fill) => el(p, 'path', { d, fill });
  const spindle = w => t => w * Math.sin(Math.PI * t);
  e(1448, 158.500, 12, 12.500, C.r); scatter(p, C.v, 1448, 152, 165, spindle(7), 110); scatter(p, C.c, 1448, 154, 163, spindle(5), 45); scatter(p, C.y, 1448, 156, 161, spindle(3), 20);
  e(1595, 158.500, 8, 8, 'none', { stroke: '#fff' }); e(1595, 148, 10.800, 14, C.r); scatter(p, '#702020', 1595, 138, 150, spindle(9), 30);
  sh('M1591 152h8l4 7q-3 8-8 8t-8-8z', C.v); scatter(p, C.v, 1595, 144, 156, spindle(5), 60); scatter(p, C.g, 1595, 155, 163, spindle(7), 60); scatter(p, C.y, 1595, 145, 160, spindle(3), 60);
  e(1742, 137, 6.500, 16, C.r); scatter(p, '#702020', 1742, 126, 145, spindle(4), 16);
  sh('M1737 147h10l5 12h-20z', C.g); sh('M1732 158h20v4l-4 4h-12l-4-4z', C.c); sh('M1739 162h6l-1.500 13h-3z', C.v);
  scatter(p, C.v, 1742, 134, 160, spindle(4), 60); scatter(p, C.y, 1742, 138, 160, () => 2.5, 50); scatter(p, C.y, 1742, 150, 160, () => 6, 60);
  sh('M1447 293h2l1 12 4 10h-12l4-10z', C.r); sh('M1446 312h4q8 12 12 22h-28q3-11 12-22z', C.y);
  sh('M1434 331h28l2 5q-3 3-8 3h-16q-5 0-8-3z', C.g); sh('M1437 337h22l3 9q-3 3-14 3t-14-3z', C.c);
  scatter(p, C.r, 1448, 314, 330, spindle(8), 80); scatter(p, C.g, 1448, 322, 334, () => 9, 60); scatter(p, C.c, 1448, 330, 338, () => 9, 40); scatter(p, C.v, 1448, 308, 340, spindle(3), 60); sh('M1446.500 338h3l.5 27-1.500 2h-1l-1.500-2z', C.v);
  sh('M1593 295q2-2 4 0 6 10 8 20 0 3-3 3h-14q-3 0-3-3 2-10 8-20z', C.r); sh('M1587 318h16q6 4 7 9-3 3-6 3h-18q-3 0-6-3 1-5 7-9z', C.y);
  sh('M1583 329h24q5 3 4 8l-3 1h-26l-3-1q-1-5 4-8z', C.g); sh('M1587 338h16l4 12q-3 4-12 4t-12-4z', C.c);
  scatter(p, C.v, 1595, 313, 328, spindle(6), 40); scatter(p, C.v, 1595, 330, 352, () => 6, 40); scatter(p, C.v, 1595, 351, 374, t => 6 * (1 - t), 130); sh('M1594 350h2l-.5 24h-1z', C.v);
  scatter(p, C.v, 1742, 275, 355, t => 33 * Math.sin(Math.PI * t) ** 1.300, 650);
  scatter(p, C.v, 1742, 243, 300, () => 3, 30); scatter(p, C.g, 1742, 246, 330, spindle(11), 300); scatter(p, C.c, 1742, 248, 300, spindle(9), 60); scatter(p, C.y, 1742, 252, 335, spindle(10), 330);
  scatter(p, C.r, 1742, 258, 316, t => 4 + 3 * t, 260); scatter(p, C.c, 1742, 325, 377, t => 9 * (1 - t), 300);
  sh('M1740 290h4l2 25-2 30-2 15-2-15-2-30z', C.y); scatter(p, C.r, 1742, 280, 315, () => 6, 140); sh('M1741 320h2l1 30-2 20-2-20z', C.g); sh('M1741 352h2l-1 25z', C.c);
  sh('M1848.500 70.500H1919V138.500H1848.500z', '#000').setAttribute('stroke', '#fff');
  ['c','g','r','y','v'].forEach((k, i) => { const y = 78.500 + 13.3 * i; el(p, 'rect', { x: 1859, y: y - 1, width: 2, height: 2, fill: C[k] }); label(p, 1870, y, ['0.4861','0.5461','0.6563','0.5890','0.4350'][i], 9, C[k], 'start'); });
  label(p, 1342, 414, '面: 像面', 7, '#fff', 'start');
}
/* 5: chromatic focal shift, left end */
{ const p = $('p5');
  grid(p, 84, 560, 584, 847, 10, 10); marks(p, 84, 560, 847, 10, 0, 5);
  ['0.656','0.634','0.612','0.590','0.568','0.546','0.524','0.501','0.479','0.457','0.435'].forEach((s, i) => label(p, 68, 560 + 28.7 * i, s, 11, '#fff', 'end'));
  label(p, 84.500, 858, '-100.0'); label(p, 132, 858, '-80.0'); side(p, 14, 704, '波长:  µm', 10);
}
/* 6: lateral colour */
{ const p = $('p6'), m = mapper(370, 530, 3, 3);
  grid(p, 193.5, 582, 664, 847, 20, 10); line(p, 428.500, 582, 428.500, 847, '#444'); marks(p, 428.500, 582, 847, 10, 6, 6); ticks(p, 193.5, 664, 847, 20);
  for (let i = 0; i <= 10; i++) { label(p, 176.500, 582 + 26.5 * i, (22 - 2.2 * i).toFixed(1), 11, '#fff', 'end'); label(p, 193 + 47.1 * i, 858, (-20 + 4 * i).toFixed(1)); }
  curve(p, '#ddd', m([25,158,35,450,43,951])); curve(p, '#ddd', m([323,158,313,450,308,951]));
  curve(p, C.c, m([66,157,35,210,22,290,38,400,105,630,145,785,175,951]), 1.8);
  curve(p, C.y, m([335,157,347,240,335,340,305,450,255,620,210,790,177,951]), 1.8);
  curve(p, C.r, m([625,157,641,215,630,280,590,365,530,450,460,543,380,645,307,745,240,845,177,951]), 1.8);
  curve(p, C.g, m([175,157,175,951]), 2);
  curve(p, C.v, m([282,157,220,190,160,240,125,300,117,370,130,450,155,560,175,670,183,780,177,951]), 1.8);
  el(p, 'path', { d: 'M652.500 540V606.500H723.500V540', fill: 'none', stroke: '#ddd' });
  ['c','g','r','y','v'].forEach((k, i) => label(p, 686, 546.500 + 13.2 * i, ['0.4861','0.5461','0.6563','0.5890','0.4350'][i], 9, C[k]));
  label(p, 453, 554.500, '最大视场: 22.0000 毫米', 10); label(p, 380, 571, '艾里斑', 6); label(p, 479, 571, '艾里斑', 6); label(p, 428.500, 874, 'µm', 10);
  side(p, 146, 713, '视场: 实际像高 单位: 毫米', 11);
}
/* 7: longitudinal aberration */
{ const p = $('p7'), m = mapper(730, 530, 2.613, 3);
  grid(p, 791, 582, 1262, 847, 20, 10); marks(p, 1026.500, 582, 847, 10, 6, 6); ticks(p, 791, 1262, 847, 20);
  ['-0.1','-0.08','-0.06','-0.04','-0.02','0','0.02','0.04','0.06','0.08','0.1'].forEach((s, i) => label(p, 791 + 47.1 * i, 858, s));
  ['1','0.9','0.8','0.7','0.6','0.5','0.4','0.3','0.2','0.1','0'].forEach((s, i) => label(p, 774, 582 + 26.5 * i, s, 11, '#fff', 'end'));
  curve(p, C.c, m([650,156,646,330,632,560,620,740,615,951]), 1.2); curve(p, C.g, m([707,156,714,250,714,400,708,640,702,790,700,951]), 1.2);
  curve(p, C.y, m([859,156,868,260,872,440,870,600,864,800,862,951]), 1.2); curve(p, C.v, m([988,156,975,270,950,450,925,650,910,820,907,951]), 1.2);
  curve(p, C.r, m([1163,156,1176,290,1181,450,1178,700,1174,951]), 1.2);
  label(p, 1078.500, 560.500, '光瞳半径: 2.6466 毫米', 10); label(p, 1026.500, 873.500, '毫米', 7); side(p, 744, 713, '归一化光瞳坐标', 9);
}
/* 8: transverse ray fans, five samples per wavelength */
{ const p = $('p8');
  const F = [
    ['0.00', { r: [-36,-20,0,20,36], c: [12,6,0,-5,-10], g: [7,4,0,-3,-6], y: [-7,-4,0,4,7], v: [-20,-10,0,10,20] }, { r: [-36,-20,0,20,36], c: [12,6,0,-5,-10], g: [7,4,0,-3,-6], y: [-7,-4,0,4,7], v: [-20,-10,0,10,20] }],
    ['4.00', { r: [-11,-8,14,45,73], c: [9,-2,-6,0,5], g: [10,-1,-2,9,15], y: [7,-1,5,22,36], v: [-24,-12,1,24,43] }, { r: [-31,-18,0,17,31], c: [15,8,0,-5,-9], g: [12,7,0,-4,-8], y: [-4,-2,0,2,4], v: [-20,-11,0,10,20] }],
    ['8.00', { r: [6,9,37,75,110], c: [-13,-20,-10,10,25], g: [7,-8,-1,20,37], y: [8,0,14,42,62], v: [-51,-33,0,38,72] }, { r: [-14,-6,0,7,14], c: [24,13,0,-11,-21], g: [24,13,0,-14,-25], y: [13,7,0,-7,-13], v: [-12,-5,0,7,13] }],
    ['12.00', { r: [24,32,55,90,121], c: [-41,-35,-15,8,24], g: [-8,-10,0,20,37], y: [9,8,20,45,66], v: [-93,-50,-5,42,81] }, { r: [8,4,0,-4,-6], g: [39,22,0,-22,-41], c: [34,20,0,-21,-37], y: [28,18,0,-18,-33], v: [-10,-2,0,2,9] }],
    ['17.00', { r: [50,62,78,104,120], c: [-55,-45,-25,-7,-4], g: [-8,-6,2,12,12], y: [18,22,33,46,50], v: [-116,-62,-5,44,65] }, { r: [20,16,0,-13,-20], c: [29,22,0,-20,-30], g: [42,28,0,-28,-44], y: [37,25,0,-25,-40], v: [-31,-8,0,5,28] }],
    ['22.00', { r: [240,130,82,62,57], c: [260,60,-20,-70,-125], g: [245,70,5,-40,-90], y: [238,90,25,-5,-37], v: [290,70,15,-10,-55] }, { c: [-25,-3,0,-2,26], r: [-22,-2,0,0,22], g: [-5,6,0,-6,7], y: [-6,5,1,-5,8], v: [-97,-40,0,38,97] }]];
  F.forEach(([s, ey, ex], i) => {
    const x = 1347.500 + 196.3 * (i % 3), y = i < 3 ? 583.500 : 760.500;
    [[ey, x, 'ey', 'Py'], [ex, x + 84.500, 'ex', 'Px']].forEach(([set, bx, top, right]) => {
      const cx = bx + 38.500, cy = y + 42.750;
      grid(p, bx, y, bx + 77, y + 85.500, 10, 10, '#1f1f1f', '#4a4a4a');
      line(p, cx, y, cx, y + 85.500, '#6a6a6a'); line(p, bx, cy, bx + 77, cy, '#555');
      for (let k = 0; k <= 10; k++) { line(p, cx - 2, y + 8.55 * k, cx + 2, y + 8.55 * k, '#999'); line(p, bx + 7.7 * k, cy - 2, bx + 7.7 * k, cy + 2, '#888'); }
      for (const k in set) curve(p, C[k], set[k].map((v, j) => [bx + 77 * j / 4, cy - v / 3]), 1);
      label(p, cx - 3, y + 3, top, 9); label(p, bx + 73, cy + 4, right, 8);
    });
    label(p, x + 81, y - 3.500, `像面:${s} mm`, 6);
  });
}
```
